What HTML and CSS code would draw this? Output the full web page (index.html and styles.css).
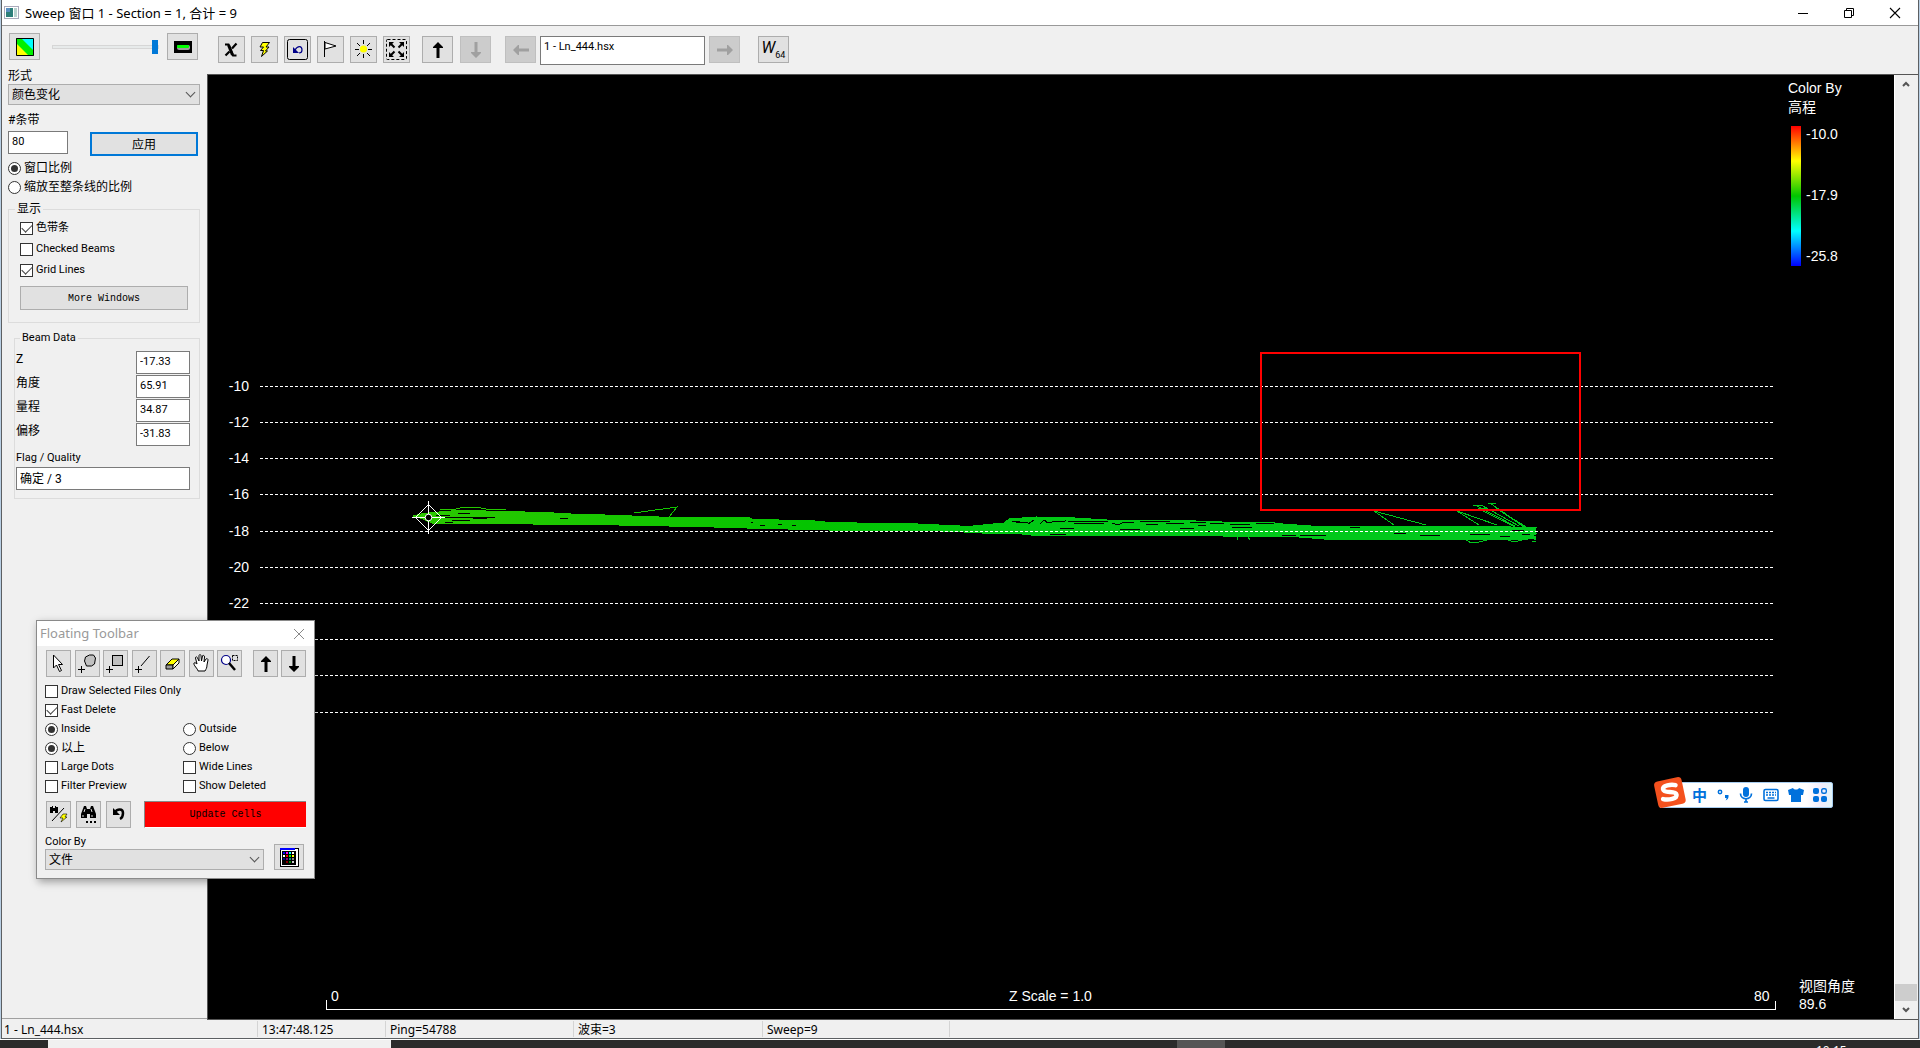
FILE: index.html
```html
<!DOCTYPE html>
<html lang="zh-CN">
<head>
<meta charset="utf-8">
<title>Sweep 窗口 1</title>
<link rel="stylesheet" href="styles.css">
</head>
<body>
<div class="window">
  <header class="titlebar">
    <svg class="app-icon" width="15" height="13" viewBox="0 0 15 13"><rect x=".5" y=".5" width="14" height="12" fill="#fff" stroke="#aab"/><rect x="2" y="2" width="7" height="9" fill="#2e7f7a"/><rect x="2" y="2" width="4" height="4" fill="#5a8fc0"/><rect x="10" y="2" width="3" height="9" fill="#b9d2cf"/></svg>
    <h1 class="title">Sweep 窗口 1 - Section = 1, 合计 = 9</h1>
    <div class="win-controls">
      <button class="win-btn" aria-label="Minimize"><svg width="12" height="12" viewBox="0 0 12 12"><path d="M1 6.500h10" stroke="#000"/></svg></button>
      <button class="win-btn" aria-label="Restore"><svg width="12" height="12" viewBox="0 0 12 12" fill="none" stroke="#000"><path d="M1.500 3.500h7v7h-7zM3.500 3.500v-2h7v7h-2"/></svg></button>
      <button class="win-btn" aria-label="Close"><svg width="12" height="12" viewBox="0 0 12 12"><path d="M1 1l10 10M11 1L1 11" stroke="#000" stroke-width="1.100"/></svg></button>
    </div>
  </header>

  <div class="body">
    <aside class="sidebar">
      <div class="slider-row">
        <button class="tool wide" aria-label="Palette"><svg width="18" height="18" viewBox="0 0 18 18"><path d="M0 0h18v18H0z" fill="#00f000"/><path d="M5 0h13v13z" fill="#0ff"/><path d="M0 5l13 13H0z" fill="#ff0"/><path d="M.5.5h17v17H.5z" fill="none" stroke="#000"/></svg></button>
        <input class="slider" type="range" min="0" max="100" value="100" aria-label="Level">
        <button class="tool wide" aria-label="Beam size"><svg width="18" height="12" viewBox="0 0 18 12"><path d="M0 0h18v12H0z"/><rect x="3" y="4" width="13" height="5" rx="2" fill="#9a9a9a"/><rect x="3" y="4" width="12" height="3" rx="1" fill="#0f0"/></svg></button>
      </div>
      <label class="caption" for="mode">形式</label>
      <span class="select"><select id="mode"><option>颜色变化</option></select></span>
      <label class="caption strips" for="strips">#条带</label>
      <div class="apply-row">
        <input class="field" id="strips" value="80">
        <button class="apply">应用</button>
      </div>
      <label class="check"><input type="radio" name="scale" checked>窗口比例</label>
      <label class="check"><input type="radio" name="scale">缩放至整条线的比例</label>

      <fieldset class="group display">
        <legend>显示</legend>
        <label class="check"><input type="checkbox" checked>色带条</label>
        <label class="check"><input type="checkbox">Checked Beams</label>
        <label class="check"><input type="checkbox" checked>Grid Lines</label>
        <button class="more">More Windows</button>
      </fieldset>

      <fieldset class="group beam">
        <legend>Beam Data</legend>
        <div class="beam-row"><label for="z">Z</label><input class="field" id="z" value="-17.33"></div>
        <div class="beam-row"><label for="angle">角度</label><input class="field" id="angle" value="65.91"></div>
        <div class="beam-row"><label for="range">量程</label><input class="field" id="range" value="34.87"></div>
        <div class="beam-row"><label for="offset">偏移</label><input class="field" id="offset" value="-31.83"></div>
        <label class="flag-label" for="flag">Flag / Quality</label>
        <input class="field flag" id="flag" value="确定 / 3">
      </fieldset>
    </aside>

    <main class="main">
      <div class="toolbar">
        <div class="tools">
          <button class="tool big" aria-label="Delete"><svg width="21" height="21" viewBox="0 0 21 21" fill="none" stroke="#000"><path d="M4 5.500h3.500l4.500 11h3.500" stroke-width="2"/><path d="M7.500 6l4 10" stroke-width="3"/><path d="M15.500 4.500L11 9.500M8.500 12.500l-4 4" stroke-width="2.200"/></svg></button>
          <button class="tool big" aria-label="Filter"><svg width="21" height="21" viewBox="0 0 21 21"><path d="M8.500 3.500h7L12 8h3l-3.500 4h2l-6 5.500 2-6h-3l3-3.500H6z" fill="#ff0" stroke="#000"/></svg></button>
          <button class="tool big" aria-label="Undo"><svg width="21" height="21" viewBox="0 0 21 21" fill="none"><rect x=".5" y=".5" width="20" height="20" rx="2" stroke="#000"/><path d="M8 11c3-5 7-4 7 0 0 2-1 3-3 3" stroke="#008" stroke-width="1.200"/><path d="M6 8v6h6z" fill="#008"/></svg></button>
          <button class="tool big" aria-label="Flag"><svg width="21" height="21" viewBox="0 0 21 21"><path d="M4.500 2v16" stroke="#000"/><path d="M5 3.500l11 3.500-11 3z" fill="#fff" stroke="#000"/></svg></button>
          <button class="tool big" aria-label="Sun"><svg width="21" height="21" viewBox="0 0 21 21"><path d="M10.500 1v4M10.500 15v4M2 10.500h4M15 10.500h4M4 4l3 3M14 14l3 3M17 4l-3 3M7 14l-3 3" stroke="#000"/><circle cx="10.500" cy="10" r="3.600" fill="#ff0"/></svg></button>
          <button class="tool big" aria-label="Fit"><svg width="21" height="21" viewBox="0 0 21 21"><rect x=".5" y=".5" width="20" height="20" rx="1" fill="none" stroke="#000" stroke-dasharray="3 2"/><path d="M3 3h5L3 8zM18 3v5l-5-5zM3 18v-5l5 5zM18 18h-5l5-5z"/><path d="M4 4l4.500 4.500M17 4l-4.500 4.500M4 17l4.500-4.500M17 17l-4.500-4.500" stroke="#000" stroke-width="2"/></svg></button>
        </div>
        <div class="tools arrows">
          <button class="tool wide" aria-label="Up"><svg width="16" height="16" viewBox="0 0 16 16"><path d="M8 0l5 5v1H9.500v10h-3V6H3V5z"/></svg></button>
          <button class="tool wide" disabled aria-label="Down"><svg width="16" height="16" viewBox="0 0 16 16"><path d="M8 16l-5-5v-1h3.500V0h3v10H13v1z" fill="#a0a0a0"/></svg></button>
        </div>
        <div class="tools nav">
          <button class="tool wide" disabled aria-label="Previous"><svg width="16" height="16" viewBox="0 0 16 16"><path d="M0 8l5-5h1v3.500h10v3H6V13H5z" fill="#a0a0a0"/></svg></button>
          <input class="field file" value="1 - Ln_444.hsx" aria-label="File">
          <button class="tool wide" disabled aria-label="Next"><svg width="16" height="16" viewBox="0 0 16 16"><path d="M16 8l-5-5h-1v3.500H0v3h10V13h1z" fill="#a0a0a0"/></svg></button>
        </div>
        <button class="tool wide w64"><i>W</i><small>64</small></button>
      </div>

      <div class="view">
        <svg class="plot" viewBox="208 75 1686 944">
          <defs>
            <linearGradient id="depth" x1="0" y1="126" x2="0" y2="266" gradientUnits="userSpaceOnUse"><stop offset="0" stop-color="#f00"/><stop offset=".25" stop-color="#ff0"/><stop offset=".5" stop-color="#00c400"/><stop offset=".75" stop-color="#0ff"/><stop offset="1" stop-color="#00f"/></linearGradient>
            <linearGradient id="sweep" x1="411" y1="0" x2="1537" y2="0" gradientUnits="userSpaceOnUse"><stop offset="0" stop-color="#2cc800"/><stop offset=".35" stop-color="#04c400"/><stop offset=".55" stop-color="#00c814"/><stop offset="1" stop-color="#00c81e"/></linearGradient>
          </defs>
          <g class="crisp" fill="none" stroke="url(#sweep)">
            <path fill="url(#sweep)" d="M413 516l8-2 8-1 10-1 12-1 13-1 22 1 12 0 27 1 29 1 17 1 34 1 54 2 37 1 36-1 16 0 4 2 27 1 25 0 21 2 32 1 11 1 32-1 18 1 42 2 13 0 20-2 11-1 5-4 27-2 39 1 32 2 62 0 53 2 44 0 17 2 28 2 200 1 24 1 0 11-24 0-81 0-106 0-25-2-77-1-182 0-18-2-41-1-17-1-24-1-111-1-83-2-32-1-46-1-50-1-86-1-64 0-36-1-9-4z"/>
            <path d="M440 510l16-1 8-2 12 0 10 2 20 0M634 513l43-6-8 10M1374 511l20 14M1374 511l52 14M1457 511l22 14M1457 511l40 14M1473 505h10M1478 508h8M1488 503h8M1475 505l40 21M1481 505l38 21M1490 503l36 25M1495 507l29 20M1479 509l36 18M1500 511l28 17M1530 533h7M1528 536h8M1520 527h17M1465 539l6 4 8-1 8-2M1237 537l1 3M1248 537l2 3M1508 540l6 2 8-2M1532 541h4"/>
          </g>
          <g class="crisp" fill="none" stroke="#000">
            <path d="M445 517h50M436 515h14M452 520h18M445 522h8M473 518h14M458 513h12M560 518h8M751 522h2M760 525h5M778 524h4M792 525h4M1012 521l8 0M1016 522h12M1028 524l6-4M1040 524l4-4 4 3 8-2 8 1 2-2M1068 521h40M1074 523h30M1112 523l6 2 6-3 10 0M1140 521h30M1146 524h12M1166 523h18M1190 522h16M1198 525h8M1210 523h14M1230 524h20M1256 523h18M1060 528h14M1120 529h20M1180 528h14M1206 531h6M1050 534h16M1282 535h14M1232 527h20M1300 535h26M1394 533h12M1350 527h10M1420 535h20M1470 534h20M1500 536h10M1512 530h12M1522 534h8M1528 539h6M1534 535h4"/>
          </g>
          <path class="crisp grid" d="M260 386.500h1515M260 422.500h1515M260 458.500h1515M260 494.500h1515M260 531.500h1515M260 567.500h1515M260 603.500h1515M260 639.500h1515M260 675.500h1515M260 712.500h1515"/>
          <g class="label" text-anchor="end">
            <text x="249" y="391">-10</text><text x="249" y="427">-12</text><text x="249" y="463">-14</text><text x="249" y="499">-16</text><text x="249" y="536">-18</text><text x="249" y="572">-20</text><text x="249" y="608">-22</text>
          </g>
          <rect x="1261" y="353" width="319" height="157" fill="none" stroke="#f00" stroke-width="2"/>
          <g fill="none" stroke="#fff"><path class="crisp" d="M412 517.500h33M428.500 501v33"/><path d="M428.500 504.500l13 13-13 13-13-13z"/><circle cx="428.500" cy="517.500" r="3.300" fill="#000"/></g>
          <path class="crisp" d="M326.500 1000v9.500h1449v-9" fill="none" stroke="#fff"/>
          <rect x="1791" y="126" width="10" height="140" fill="url(#depth)"/>
          <g class="label">
            <text x="331" y="1001">0</text>
            <text x="1009" y="1001">Z Scale = 1.0</text>
            <text x="1754" y="1001">80</text>
            <text x="1788" y="93">Color By</text>
            <text x="1788" y="112">高程</text>
            <text x="1806" y="139">-10.0</text><text x="1806" y="200">-17.9</text><text x="1806" y="261">-25.8</text>
            <text x="1799" y="991">视图角度</text>
            <text x="1799" y="1009">89.6</text>
          </g>
        </svg>
        <div class="scrollbar">
          <svg width="8" height="6" viewBox="0 0 8 6"><path d="M1 5l3-3 3 3" fill="none" stroke="#555" stroke-width="2"/></svg>
          <span class="thumb"></span>
          <svg width="8" height="6" viewBox="0 0 8 6"><path d="M1 1l3 3 3-3" fill="none" stroke="#555" stroke-width="2"/></svg>
        </div>
      </div>
    </main>
  </div>

  <footer class="status">
    <span class="s-file">1 - Ln_444.hsx</span><span class="s-time">13:47:48.125</span><span class="s-ping">Ping=54788</span><span class="s-beam">波束=3</span><span class="s-sweep">Sweep=9</span>
  </footer>
</div>

<div class="taskbar"><span class="task"></span><span class="tray"></span><span class="clock">10:15</span></div>

<section class="floating">
  <header class="float-title"><h2>Floating Toolbar</h2><button class="float-close" aria-label="Close"><svg width="10" height="10" viewBox="0 0 10 10"><path d="M0 0l10 10M10 0L0 10" stroke="#888"/></svg></button></header>
  <div class="float-body">
    <div class="float-tools">
      <div class="edit-tools">
        <button class="tool" aria-label="Select"><svg width="19" height="21" viewBox="0 0 19 21"><path d="M4.500 2v13l3-3 3 6.500 2-1-3-6h4z" fill="#fff" stroke="#000"/></svg></button>
        <button class="tool" aria-label="Add polygon"><svg width="19" height="21" viewBox="0 0 19 21"><path d="M6.500 8l1-4 4-2h4l2 3-1 6-3 2h-5z" fill="#c0c0c0" stroke="#000"/><path d="M0 16.500h7M3.500 13v7" stroke="#000"/></svg></button>
        <button class="tool" aria-label="Add rectangle"><svg width="19" height="21" viewBox="0 0 19 21"><rect x="6.500" y="2.500" width="10" height="10" fill="#c0c0c0" stroke="#000"/><path d="M0 16.500h7M3.500 13v7" stroke="#000"/></svg></button>
        <button class="tool" aria-label="Add line"><svg width="19" height="21" viewBox="0 0 19 21"><path d="M14.500 3L6 13M0 16.500h7M3.500 13v7" stroke="#000"/></svg></button>
        <button class="tool" aria-label="Erase"><svg width="19" height="21" viewBox="0 0 19 21" stroke="#000" stroke-linejoin="round"><path d="M3 12l6-6h7l-6 6z" fill="#ff0"/><path d="M3 12h7v4H3z" fill="#999"/><path d="M10 12l6-6v4l-6 6z" fill="#ffd"/></svg></button>
        <button class="tool" aria-label="Pan"><svg width="19" height="21" viewBox="0 0 19 21"><path d="M6 18c0-2-5-6-4-8 1-1 3 1 3 1L3.500 5c0-2 2-1 2 0L7 8V3c0-2 2-2 2 0l.5 5 1-5c0-1 2-1 2 1L12 9l2-3c1-1 2 0 2 1l-1 5c0 3-1 4-2 6z" fill="#fff" stroke="#000"/></svg></button>
        <button class="tool" aria-label="Zoom window"><svg width="19" height="21" viewBox="0 0 19 21"><circle cx="6" cy="7" r="4.500" fill="#fff" stroke="#008" stroke-width="1.200"/><path d="M9 10l6 7" stroke="#000" stroke-width="2.500"/><rect x="12.500" y="2.500" width="5" height="5" fill="none" stroke="#000" stroke-dasharray="2 1"/></svg></button>
      </div>
      <button class="tool" aria-label="Up"><svg width="16" height="16" viewBox="0 0 16 16"><path d="M8 0l5 5v1H9.500v10h-3V6H3V5z"/></svg></button>
      <button class="tool" aria-label="Down"><svg width="16" height="16" viewBox="0 0 16 16"><path d="M8 16l-5-5v-1h3.500V0h3v10H13v1z"/></svg></button>
    </div>
    <div class="float-options">
      <label class="check full"><input type="checkbox">Draw Selected Files Only</label>
      <label class="check full"><input type="checkbox" checked>Fast Delete</label>
      <label class="check"><input type="radio" name="side" checked>Inside</label>
      <label class="check"><input type="radio" name="side">Outside</label>
      <label class="check large"><input type="radio" name="level" checked>以上</label>
      <label class="check"><input type="radio" name="level">Below</label>
      <label class="check"><input type="checkbox">Large Dots</label>
      <label class="check"><input type="checkbox">Wide Lines</label>
      <label class="check"><input type="checkbox">Filter Preview</label>
      <label class="check"><input type="checkbox">Show Deleted</label>
    </div>
    <div class="update-row">
      <button class="tool" aria-label="Search and filter"><svg width="21" height="21" viewBox="0 0 21 21"><path d="M2 3h2V2h1v2h2V2h1v1h2v6H7V7H5v2H2z"/><path d="M16 4L4 17" stroke="#000"/><path d="M15 10h4l-2 3h2l-6 5 2-4h-3z" fill="#ff0" stroke="#000" stroke-width=".6"/></svg></button>
      <button class="tool" aria-label="Search"><svg width="19" height="21" viewBox="0 0 19 21"><path d="M5 2h2l1 3h3l1-3h2l3 8v4h-6v-4H8v4H2v-4z"/><path d="M4 11v2M13 11v2M6 5L5 8M12 5l1 3" stroke="#ddd"/><path d="M7 17h2v2H7zM11 17h2v2h-2zM15 17h2v2h-2z"/></svg></button>
      <button class="tool" aria-label="Undo"><svg width="19" height="21" viewBox="0 0 19 21"><path d="M4 4v7h7z"/><path d="M6 8c2-3 8-4 8 1 0 3-1 5-3 6" fill="none" stroke="#000" stroke-width="2.500"/></svg></button>
      <button class="update">Update Cells</button>
    </div>
    <div class="color-row">
      <div class="color-by">
        <label class="caption" for="colorby">Color By</label>
        <span class="select"><select id="colorby"><option>文件</option></select></span>
      </div>
      <button class="tool palette" aria-label="Colors"><svg class="crisp" width="20" height="20" viewBox="0 0 20 20"><path d="M1 1h18v18H1z" fill="#fff" stroke="#000"/><path d="M1 1h15v2H1z" fill="#00f"/><path d="M3 4h14v14H3z"/><path d="M4 5h2v2H4z" fill="#00f"/><path d="M7 5h2v2H7z" fill="#f0f"/><path d="M10 5h2v2h-2z" fill="#0ff"/><path d="M13 5h2v2h-2zM4 8h2v2H4z" fill="#fff"/><path d="M7 8h2v2H7z" fill="#f00"/><path d="M10 8h2v2h-2z" fill="#0f0"/><path d="M13 8h2v2h-2z" fill="#ff0"/><path d="M4 11h2v2H4z" fill="#008"/><path d="M7 11h2v2H7z" fill="#808"/><path d="M10 11h2v2h-2z" fill="#088"/><path d="M13 11h2v2h-2z" fill="#888"/><path d="M7 14h2v2H7z" fill="#800"/><path d="M10 14h2v2h-2z" fill="#080"/><path d="M13 14h2v2h-2z" fill="#ccc"/></svg></button>
    </div>
  </div>
</section>

<div class="ime">
  <svg class="ime-logo" width="32" height="32" viewBox="0 0 32 32"><g transform="rotate(-12 16 16)"><rect x="2" y="2" width="28" height="27" rx="4" fill="#f4511e"/><path d="M23 9.500c-4-2-13-2.500-13 1.500 0 5 12 3 12 8 0 4-9 4-14 1.500" fill="none" stroke="#fff" stroke-width="4.500" stroke-linecap="round"/></g></svg>
  <span class="ime-lang">中</span>
  <svg width="14" height="14" viewBox="0 0 14 14"><circle cx="4" cy="4" r="1.700" fill="none" stroke="#0071dc" stroke-width="1.500"/><path d="M9 7h3.500c.5 3-1 5-3 5.500 1-1 1-2 1-2.500H9z" fill="#0071dc"/></svg>
  <svg width="14" height="16" viewBox="0 0 14 16"><rect x="4" y="0" width="6" height="10" rx="3" fill="#0071dc"/><path d="M1.500 6.500c0 7 11 7 11 0M5 15h4M7 12v3" fill="none" stroke="#0071dc" stroke-width="1.700"/></svg>
  <svg width="16" height="14" viewBox="0 0 16 14"><rect x="1" y="1.500" width="14" height="11" rx="1.500" fill="none" stroke="#0071dc" stroke-width="1.600"/><path d="M3 4.500h10M3 7h10" stroke="#0071dc" stroke-width="1.500" stroke-dasharray="2 1"/><path d="M4.500 10h7" stroke="#0071dc" stroke-width="1.500"/></svg>
  <svg width="16" height="14" viewBox="0 0 16 14"><path d="M5 0c1 2 5 2 6 0l5 2-1 5h-2v7H3V7H1L0 2z" fill="#0071dc"/></svg>
  <svg width="14" height="14" viewBox="0 0 14 14" fill="#0071dc"><rect width="6" height="6" rx="2"/><rect y="8" width="6" height="6" rx="2"/><rect x="8" y="8" width="6" height="6" rx="2"/><rect x="8.700" y=".7" width="4.600" height="4.600" rx="1.500" fill="none" stroke="#0071dc" stroke-width="1.400"/></svg>
</div>
</body>
</html>
```
FILE: styles.css
```css
* { box-sizing: border-box; }
body {
  margin: 0;
  height: 100vh;
  display: flex;
  flex-direction: column;
  overflow: hidden;
  background: #b9cfe4;
  color: #000;
  font: 11px/16px Roboto, "Noto Sans CJK SC", sans-serif;
}
button, input, select { font: inherit; color: inherit; margin: 0; border-radius: 0; }
h1, h2 { margin: 0; font-weight: normal; }
.crisp { shape-rendering: crispEdges; }

.window {
  flex: 1;
  min-height: 0;
  margin: 0 1px;
  border: 1px solid #5c5f62;
  border-top: 0;
  display: flex;
  flex-direction: column;
  background: #f0f0f0;
}
.titlebar {
  height: 26px;
  flex: none;
  display: flex;
  align-items: center;
  padding-left: 2px;
  gap: 6px;
  background: #fff;
  border-bottom: 1px solid #999;
}
.title, .float-title h2 { font: 13px/18px "Noto Sans", "Noto Sans CJK SC", sans-serif; }
.win-controls { margin-left: auto; display: flex; }
.win-btn {
  width: 46px; height: 24px; padding: 0; border: 0; background: none;
  display: grid; place-items: center;
}

.body {
  flex: 1;
  min-height: 0;
  display: grid;
  grid-template-columns: 205px 1fr;
}
.sidebar {
  display: flex;
  flex-direction: column;
  padding: 7px 7px 0 6px;
  margin-bottom: 1px;
  border-bottom: 1px solid #a0a0a0;
}
.tool {
  width: 25px; height: 27px; padding: 0; flex: none;
  display: grid; place-items: center;
  background: #e1e1e1; border: 1px solid #adadad;
}
.tool svg { display: block; }
.tool.wide { width: 31px; }
.tool.big { width: 27px; }
.tool:disabled { background: #ccc; border-color: #bfbfbf; }

.slider-row { display: flex; align-items: center; padding: 0 2px 0 1px; gap: 8px; }
.slider { appearance: none; flex: 1; min-width: 0; height: 16px; margin-left: 4px; background: none; }
.slider::-webkit-slider-runnable-track { height: 4px; background: #e7eaea; border: 1px solid #d6d6d6; }
.slider::-webkit-slider-thumb { appearance: none; width: 6px; height: 14px; margin-top: -6px; background: #0078d7; }

.caption { display: block; padding-top: 1px; line-height: 15px; margin-top: 8px; font-size: 12px; }
.caption.strips { margin-top: 7px; }
.select { position: relative; display: block; }
.select::after {
  content: ""; position: absolute; right: 6px; top: 5px; width: 6px; height: 6px;
  border: solid #555; border-width: 0 1px 1px 0; transform: rotate(45deg);
}
select {
  appearance: none; display: block; width: 100%; height: 21px; padding: 1px 3px 0;
  background: #e1e1e1; border: 1px solid #adadad; font-size: 12px;
}
.field {
  width: 54px; height: 23px; padding: 0 3px 3px; min-width: 0;
  background: #fff; border: 1px solid #7a7a7a;
}
.apply-row { display: flex; justify-content: space-between; align-items: flex-start; padding-right: 2px; margin: 3px 0 4px; }
.apply-row .field { width: 60px; }
.apply { width: 108px; height: 24px; margin-top: 1px; padding: 1px 0 0; background: #e1e1e1; border: 2px solid #0078d7; font-size: 12px; }

.check { display: flex; align-items: center; gap: 3px; height: 16px; white-space: nowrap; }
.check.large { font-size: 12px; }
.sidebar > .check { font-size: 12px; margin-bottom: 3px; }
.check input {
  appearance: none; width: 13px; height: 13px; flex: none;
  display: grid; place-items: center;
  background: #fff; border: 1px solid #333;
}
.check input[type="radio"] { border-radius: 50%; }
.check input[type="radio"]:checked::before { content: ""; width: 7px; height: 7px; border-radius: 50%; background: #333; }
.check input[type="checkbox"]:checked::before {
  content: ""; width: 9px; height: 5px; margin-bottom: 3px;
  border: solid #444; border-width: 0 0 1px 1px; transform: rotate(-45deg);
}

.group { min-width: 0; margin: 0; border: 1px solid #dcdcdc; }
.group legend { padding: 0 2px; line-height: 12px; }
.display { margin-top: 5px; padding: 5px 11px 12px 11px; display: flex; flex-direction: column; gap: 5px; }
.display legend { margin-left: -5px; font-size: 12px; }
.more, .update { font: 10px/12px "Liberation Mono", monospace; padding: 1px 0 0; }
.more { height: 24px; margin-top: 3px; background: #e1e1e1; border: 1px solid #adadad; }
.beam { margin: 9px 0 0 6px; padding: 7px 9px 8px 1px; }
.beam legend { margin-left: 4px; }
.beam-row { display: flex; justify-content: space-between; align-items: flex-start; margin-bottom: 1px; font-size: 12px; }
.beam-row .field { font-size: 11px; }
.flag-label { display: block; margin-top: 4px; }
.flag { width: 100%; margin-top: 1px; display: block; font-size: 12px; }

.main { min-width: 0; min-height: 0; display: flex; flex-direction: column; }
.toolbar { flex: none; height: 48px; display: flex; align-items: flex-start; padding: 10px 0 0 11px; }
.tools { display: flex; gap: 6px; }
.arrows { gap: 7px; margin-left: 12px; }
.nav { gap: 4px; margin-left: 14px; }
.file { width: 165px; height: 29px; padding-bottom: 8px; }
.w64 { margin-left: 18px; display: flex; align-items: center; justify-content: center; }
.w64 i { font-size: 16px; padding-bottom: 4px; }
.w64 small { font-size: 9px; padding-top: 10px; }

.view { flex: 1; min-height: 0; display: flex; background: #000; border: solid #555; border-width: 1px 0 1px 1px; }
.plot { flex: 1; min-width: 0; height: 100%; display: block; }
.grid { stroke: #fff; stroke-dasharray: 3 2; fill: none; }
.label { fill: #fff; font: 14px "Liberation Sans", "Noto Sans CJK SC", sans-serif; }
.scrollbar {
  width: 24px; flex: none; padding: 6px 2px 6px 0; background: #f0f0f0; border-left: 1px solid #fff;
  display: flex; flex-direction: column; align-items: center;
}
.thumb { width: 22px; height: 17px; margin: auto 0 6px; background: #cdcdcd; }

.status { flex: none; height: 18px; display: flex; font: 12px/17px "Noto Sans", "Noto Sans CJK SC", sans-serif; }
.status span { padding-left: 4px; border-right: 1px solid #d4d4d4; margin: 1px 0; line-height: 17px; }
.status .s-file { width: 256px; padding-left: 2px; }
.s-time { width: 128px; }
.s-ping { width: 188px; }
.s-beam { width: 189px; }
.s-sweep { width: 187px; }

.taskbar { height: 9px; flex: none; display: flex; overflow: hidden; background: #2b2b2b; border-top: 1px solid #fff; }
.task { width: 343px; margin-left: 48px; background: #f0f0f0; }
.tray { width: 48px; margin-left: auto; background: #555; }
.clock { width: 104px; margin-left: 591px; color: #fff; font: 12px/16px "Noto Sans", sans-serif; padding-top: 3px; }

.floating {
  position: absolute; left: 36px; top: 620px; width: 279px;
  background: #f0f0f0; border: 1px solid #8a8a8a; box-shadow: 2px 3px 8px rgba(0, 0, 0, .35);
}
.float-title { height: 25px; padding: 0 10px 0 3px; display: flex; align-items: center; justify-content: space-between; background: #fff; color: #999; }
.float-title h2 { padding-bottom: 1px; }
.float-close { border: 0; padding: 0; background: none; display: grid; }
.float-body { padding: 4px 8px 8px; }
.float-tools, .update-row { display: flex; gap: 3px; padding-left: 1px; }
.edit-tools { width: 196px; margin-right: auto; display: flex; justify-content: space-between; }
.float-options { display: grid; grid-template-columns: 138px 1fr; row-gap: 3px; margin-top: 6px; }
.full { grid-column: 1 / -1; }
.update-row { margin-top: 7px; gap: 5px; }
.update { flex: 1; margin-left: 8px; background: #f00; border: solid; border-width: 1px 0 1px 1px; border-color: #888 #fff #fff #888; }
.color-row { display: flex; justify-content: space-between; align-items: flex-end; padding-right: 2px; }
.color-by { width: 219px; }
.color-by .caption { margin-top: 5px; font-size: 11px; }
.palette { width: 30px; height: 26px; }

.ime {
  position: absolute; right: 87px; top: 782px; width: 174px; height: 26px;
  padding: 0 5px 0 32px; display: flex; align-items: center; justify-content: space-between;
  background: linear-gradient(90deg, #fff 85%, #f1ecfb 94%, #e2f6fb); border: 1px solid #a8cdf0; border-radius: 2px;
}
.ime-logo { position: absolute; left: -6px; top: -6px; }
.ime-lang { color: #0071dc; font: bold 15px/18px "Noto Sans CJK SC", sans-serif; }
```
